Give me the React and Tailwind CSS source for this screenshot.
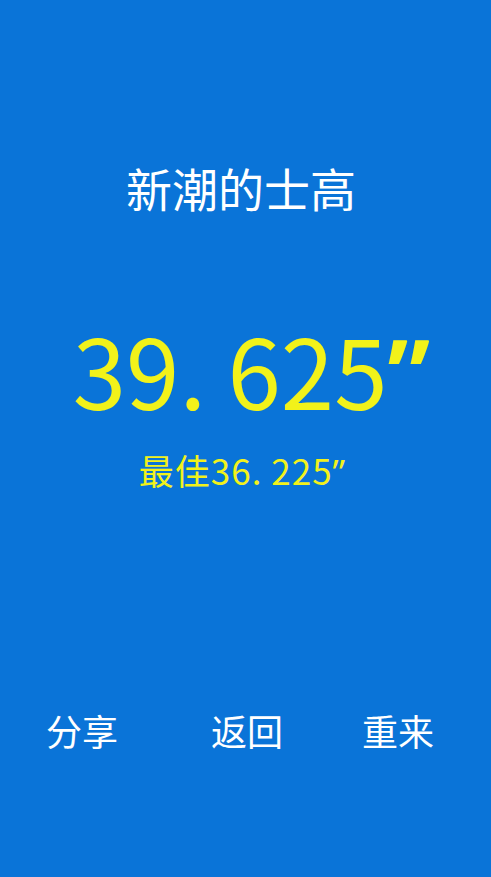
import React from 'react';

const App = () => {
  const actions = [
    { label: '分享', cls: '' },
    { label: '返回', cls: 'ml-[93px]' },
    { label: '重来', cls: 'ml-[79px]' },
  ];

  return (
    <div
      className="w-full h-[877px] bg-[#0a74d8] flex flex-col items-center"
      style={{ fontFamily: '"Noto Sans CJK SC", "Noto Sans", sans-serif' }}
    >
      {/* Title */}
      <h1 className="mt-[159px] text-[46px] leading-[56px] text-white -ml-[9px]">
        新潮的士高
      </h1>

      {/* Current time */}
      <div className="mt-[94px] text-[96px] leading-[120px] text-[#f2f21a] whitespace-nowrap ml-[12px]">
        39. 625<span className="font-['Noto_Sans',sans-serif] font-bold">”</span>
      </div>

      {/* Best */}
      <div className="mt-[15px] text-[35px] leading-[44px] text-[#f2f21a] whitespace-nowrap -ml-[6px] tracking-[1px]">
        最佳36. 225<span className="font-['Noto_Sans',sans-serif]">”</span>
      </div>

      {/* Actions */}
      <div className="mt-[211px] w-full flex pl-[46px]">
        {actions.map((a) => (
          <button key={a.label} className={`text-[36px] leading-[50px] text-white ${a.cls}`}>
            {a.label}
          </button>
        ))}
      </div>
    </div>
  );
};

export default App;
